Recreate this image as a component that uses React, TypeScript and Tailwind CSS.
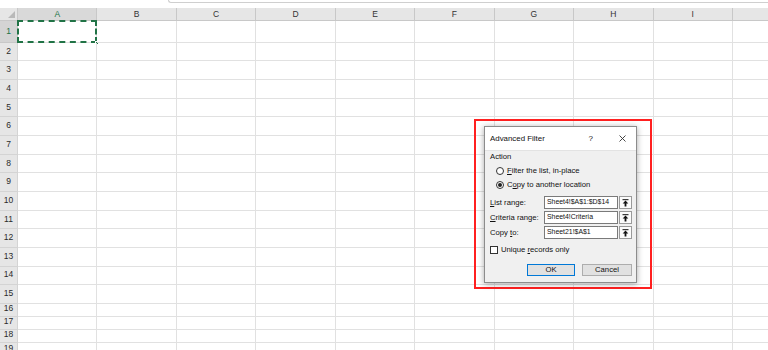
import React from 'react';

const COLS = ['A', 'B', 'C', 'D', 'E', 'F', 'G', 'H', 'I', ''];

// row heights taken from the screenshot (the sheet was scaled, rows 16+ are shorter)
const ROWS = [
  { n: 1, h: 'h-[21.7px]', pb: 'pb-[4px]' },
  { n: 2, h: 'h-[18.67px]', pb: 'pb-[3px]' },
  { n: 3, h: 'h-[18.67px]', pb: 'pb-[3px]' },
  { n: 4, h: 'h-[18.67px]', pb: 'pb-[3px]' },
  { n: 5, h: 'h-[18.67px]', pb: 'pb-[3px]' },
  { n: 6, h: 'h-[18.67px]', pb: 'pb-[3px]' },
  { n: 7, h: 'h-[18.67px]', pb: 'pb-[3px]' },
  { n: 8, h: 'h-[18.67px]', pb: 'pb-[3px]' },
  { n: 9, h: 'h-[18.67px]', pb: 'pb-[3px]' },
  { n: 10, h: 'h-[18.67px]', pb: 'pb-[3px]' },
  { n: 11, h: 'h-[18.67px]', pb: 'pb-[3px]' },
  { n: 12, h: 'h-[18.67px]', pb: 'pb-[3px]' },
  { n: 13, h: 'h-[18.67px]', pb: 'pb-[3px]' },
  { n: 14, h: 'h-[18.67px]', pb: 'pb-[3px]' },
  { n: 15, h: 'h-[18.67px]', pb: 'pb-[3px]' },
  { n: 16, h: 'h-[13.1px]', pb: 'pb-[1px]' },
  { n: 17, h: 'h-[13.1px]', pb: 'pb-[1px]' },
  { n: 18, h: 'h-[13.1px]', pb: 'pb-[1px]' },
  { n: 19, h: 'h-[13.1px]', pb: 'pb-[1px]' },
];

const U: React.FC<{ children: React.ReactNode }> = ({ children }) => (
  <span className="underline underline-offset-[1px]">{children}</span>
);

const CollapseIcon = () => (
  <svg width="7" height="8" viewBox="0 0 7 8">
    <line x1="0.5" y1="0.7" x2="6.5" y2="0.7" stroke="#111" strokeWidth="1" />
    <polygon points="3.5,1.6 6.3,4.4 4.4,4.4 4.4,7.6 2.6,7.6 2.6,4.4 0.7,4.4" fill="#111" />
  </svg>
);

const RefField: React.FC<{ label: React.ReactNode; value: string }> = ({ label, value }) => (
  <div className="flex items-center h-[13px] mb-[2px]">
    <div className="w-[59px] pl-[5px] whitespace-nowrap">{label}</div>
    <div className="w-[74px] h-[13px] bg-white border border-[#7a7a7a] flex items-center pl-[2px] text-[6.9px] whitespace-nowrap overflow-hidden">
      {value}
    </div>
    <div className="ml-[1px] w-[13px] h-[13px] bg-[#fbfbfb] border border-[#9a9a9a] flex items-center justify-center">
      <CollapseIcon />
    </div>
  </div>
);

const Radio: React.FC<{ checked?: boolean; children: React.ReactNode }> = ({ checked, children }) => (
  <div className="flex items-center h-[14px] pl-[11px]">
    <div className="w-[8px] h-[8px] rounded-full border border-[#333] bg-white flex items-center justify-center">
      {checked && <div className="w-[4px] h-[4px] rounded-full bg-[#222]" />}
    </div>
    <span className="ml-[3px] whitespace-nowrap">{children}</span>
  </div>
);

const AdvancedFilter = () => (
  <div
    className="absolute left-[484px] top-[126px] w-[153px] h-[157px] bg-[#f0f0f0] border border-[#8c8c8c] shadow-[0_1px_6px_rgba(0,0,0,0.35)] text-[7.7px] text-[#111] flex flex-col"
    style={{ fontFamily: '"Liberation Sans", Arial, sans-serif' }}
  >
    {/* title bar */}
    <div className="h-[24px] bg-white flex items-center pl-[5px] pr-[10px] border-b border-[#e3e3e3]">
      <span className="text-[7.9px]">Advanced Filter</span>
      <span className="ml-auto mr-[26px] text-[8px]">?</span>
      <svg width="7" height="7" viewBox="0 0 7 7">
        <path d="M0.5 0.5 L6.5 6.5 M6.5 0.5 L0.5 6.5" stroke="#333" strokeWidth="0.9" />
      </svg>
    </div>

    <div className="pt-[1px]">
      <div className="pl-[5px] h-[10px] flex items-center">Action</div>
      <div className="mt-[2px]">
        <Radio>
          <U>F</U>ilter the list, in-place
        </Radio>
        <Radio checked>
          C<U>o</U>py to another location
        </Radio>
      </div>

      <div className="mt-[4px]">
        <RefField label={<><U>L</U>ist range:</>} value="Sheet4!$A$1:$D$14" />
        <RefField label={<><U>C</U>riteria range:</>} value="Sheet4!Criteria" />
        <RefField label={<>Copy <U>t</U>o:</>} value="Sheet21!$A$1" />
      </div>

      <div className="flex items-center pl-[5px] mt-[6px] h-[10px]">
        <div className="w-[8px] h-[8px] bg-white border border-[#333]" />
        <span className="ml-[3px] whitespace-nowrap">
          Unique <U>r</U>ecords only
        </span>
      </div>

      <div className="flex mt-[9px] pl-[42px] gap-[7px]">
        <div className="w-[48px] h-[12px] bg-[#e1e1e1] border border-[#0078d7] flex items-center justify-center">
          OK
        </div>
        <div className="w-[50px] h-[12px] bg-[#e1e1e1] border border-[#adadad] flex items-center justify-center">
          Cancel
        </div>
      </div>
    </div>
  </div>
);

export default function App() {
  return (
    <div
      className="relative w-[768px] h-[350px] overflow-hidden bg-white"
      style={{ fontFamily: '"Liberation Sans", Arial, sans-serif' }}
    >
      {/* remnant of the formula bar */}
      <div className="h-[8px] flex">
        <div className="ml-[168px] flex-1 h-[3px] border-l border-b border-[#cfcfcf] rounded-bl-[3px]" />
      </div>

      {/* column headers */}
      <div className="flex h-[13px] bg-[#e6e6e6] border-b border-[#c8c8c8]">
        <div className="relative w-[18px] shrink-0 border-r border-[#c8c8c8]">
          <svg className="absolute right-[2px] bottom-[2px]" width="7" height="7" viewBox="0 0 7 7">
            <polygon points="7,0 7,7 0,7" fill="#b9b9b9" />
          </svg>
        </div>
        {COLS.map((c, i) => (
          <div
            key={i}
            className={
              i === 0
                ? 'w-[79.44px] shrink-0 flex items-center justify-center text-[8.5px] text-[#217346] bg-[#d9d9d9] border-r border-[#c8c8c8]'
                : 'w-[79.44px] shrink-0 flex items-center justify-center text-[8.5px] text-[#333] border-r border-[#c8c8c8]'
            }
          >
            {c}
          </div>
        ))}
      </div>

      {/* rows */}
      {ROWS.map((r) => (
        <div key={r.n} className={`flex ${r.h}`}>
          <div
            className={
              r.n === 1
                ? `w-[18px] shrink-0 flex items-end justify-center ${r.pb} text-[8.5px] text-[#217346] bg-[#d4d4d4] border-r border-b border-[#c8c8c8]`
                : `w-[18px] shrink-0 flex items-end justify-center ${r.pb} text-[8.5px] text-[#2a2a2a] bg-[#e6e6e6] border-r border-b border-[#d4d4d4]`
            }
          >
            {r.n}
          </div>
          {COLS.map((c, i) => (
            <div key={i} className="relative w-[79.44px] shrink-0 border-r border-b border-[#e1e1e1]">
              {r.n === 1 && i === 0 && (
                <>
                  <div className="absolute -left-[1px] -top-[1px] -right-[1px] -bottom-[1px] border-2 border-dashed border-[#217346]" />
                  <div className="absolute -right-[3px] -bottom-[3px] w-[4px] h-[4px] bg-[#217346] border border-white" />
                </>
              )}
            </div>
          ))}
        </div>
      ))}

      {/* red highlight around the dialog */}
      <div className="absolute left-[474px] top-[119px] w-[178px] h-[170px] border-2 border-[#ff2020]" />

      <AdvancedFilter />
    </div>
  );
}
